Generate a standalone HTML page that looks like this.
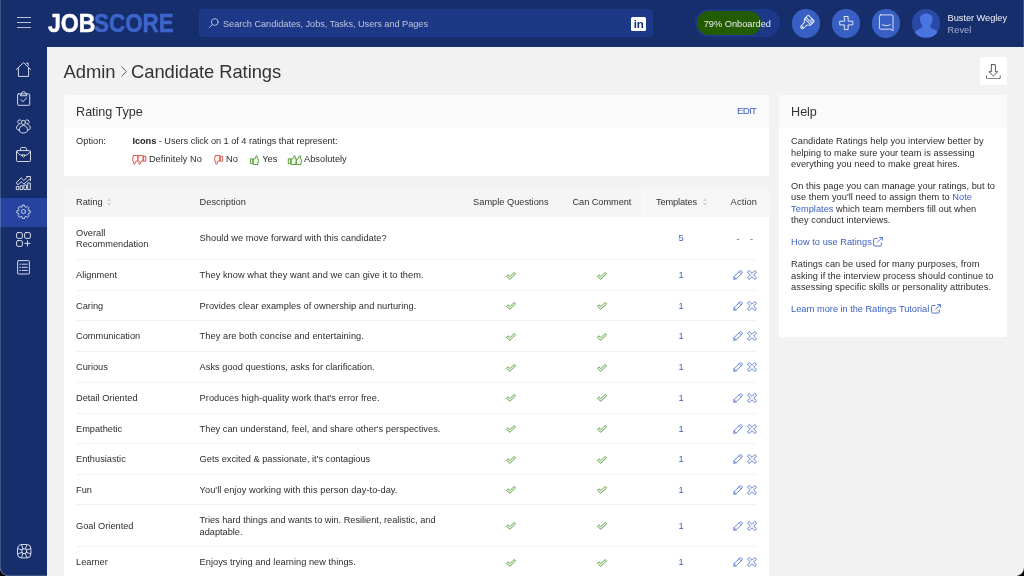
<!DOCTYPE html>
<html lang="en">
<head>
<meta charset="utf-8">
<title>Candidate Ratings - JobScore</title>
<style>
*{box-sizing:border-box;margin:0;padding:0}
html,body{width:1024px;height:576px;overflow:hidden;background:#000}
body{font-family:"Liberation Sans",Arial,sans-serif;font-size:9.24px;line-height:11.4px;color:#2d2d2d;position:relative}
#win{will-change:transform;position:absolute;left:0;top:0;width:1024px;height:576px;background:#f2f2f2;overflow:hidden;border-radius:0 0 8.5px 8.5px}
#frame{position:absolute;left:0;top:0;width:1024px;height:576px;border:1px solid rgba(255,255,255,.18);border-top:none;border-radius:0 0 8.5px 8.5px;z-index:50;pointer-events:none}
a{color:#3b5fc4;text-decoration:none}
/* top bar */
#top{position:absolute;left:0;top:0;width:1024px;height:47px;background:#172e6d}
#side{position:absolute;left:0;top:47px;width:47px;height:529px;background:#172e6d}
#side .act{position:absolute;left:0;top:151px;width:47px;height:28.7px;background:#2643a0}
#side svg{position:absolute;overflow:visible;fill:none;stroke:#dde2f0;stroke-width:.95;stroke-linecap:round;stroke-linejoin:round}
#burger{position:absolute;left:17px;top:17px;width:14px;height:11px}
#burger i{position:absolute;left:0;width:13.6px;height:1px;background:#b9c0d8}
#logo span{position:absolute;top:8.2px;font-size:25px;line-height:30px;font-weight:700;white-space:nowrap;transform-origin:0 0}
#logo .j{left:48.3px;color:#fff;-webkit-text-stroke:.5px #fff;transform:scaleX(.925)}
#logo .s{left:94.4px;color:#3c65cb;-webkit-text-stroke:.5px #3c65cb;transform:scaleX(.897)}
#search{position:absolute;left:199.3px;top:9.3px;width:453.3px;height:27.8px;background:#1e3888;border-radius:3px}
#search span{position:absolute;left:23.7px;top:9.3px;color:#bcc4dd;white-space:nowrap;letter-spacing:-.058px}
#search svg{position:absolute;left:9.5px;top:9px;width:10px;height:10px;overflow:visible}
#lin{position:absolute;left:432px;top:7.3px;width:14.6px;height:14.4px;background:#fff;border-radius:1.5px;color:#172e6d;font-weight:700;font-size:11.5px;line-height:14px;text-align:center;letter-spacing:-.3px}
#onb{position:absolute;left:694.8px;top:9.3px;width:85.4px;height:28px;border-radius:14px;background:#1e3888}
#onb i{position:absolute;left:2px;top:2.2px;width:64px;height:23.6px;border-radius:12px;background:#235c00}
#onb span{position:absolute;left:8.9px;top:9.3px;color:#e8ecf4;white-space:nowrap}
.cb{position:absolute;top:9.3px;width:28.5px;height:28.5px;border-radius:50%;background:#3860c4}
.cb svg{position:absolute;left:0;top:0;width:28.5px;height:28.5px;fill:none;stroke:#e6ebf8;stroke-width:.9;stroke-linejoin:round;stroke-linecap:round}
#av{position:absolute;left:911.8px;top:9.3px;width:28.5px;height:28.5px;border-radius:50%;background:#2a49a6;overflow:hidden}
#av svg{position:absolute;left:0;top:0;width:28.5px;height:28.5px}
#uname{position:absolute;left:947.6px;top:12.9px;color:#eef1f8;white-space:nowrap;letter-spacing:-.04px}
#ucomp{position:absolute;left:947.6px;top:24.8px;color:#a9b3cf;white-space:nowrap}
/* heading */
#h1{position:absolute;left:63.6px;top:60.8px;font-size:18.4px;line-height:22px;color:#333;white-space:nowrap;letter-spacing:-.08px}
#h1 svg{display:inline-block;width:6px;height:11px;margin:0 4.2px 0 5.6px;vertical-align:1px;fill:none;stroke:#555;stroke-width:.9}
#dl{position:absolute;left:979.8px;top:56.8px;width:27.2px;height:28px;background:#fff;border-radius:2px}
#dl svg{position:absolute;left:6.2px;top:7px;width:15px;height:15.4px;fill:none;stroke:#444;stroke-width:.9;stroke-linejoin:round;stroke-linecap:round}
.card{position:absolute;background:#fff;border-radius:2.5px;overflow:hidden}
.hd{position:absolute;left:0;top:0;right:0;background:#fafafa}
.ttl{position:absolute;font-size:12.6px;line-height:15px;color:#333;white-space:nowrap;letter-spacing:-.04px}
/* rating type */
#c1{left:64px;top:95px;width:704.6px;height:81.3px}
#c1 .hd{height:32.7px}
#c1 .ttl{left:12.1px;top:10.3px}
#edit{position:absolute;right:12.4px;top:10.2px;font-size:9.7px;color:#3b5fc4;letter-spacing:-.72px}
#opt{position:absolute;left:12.1px;top:41.1px}
#ol1{position:absolute;left:68.4px;top:41.1px;white-space:nowrap;letter-spacing:-.05px}
#ol1 b{font-weight:700;color:#222}
#ol2{position:absolute;left:68.4px;top:59.3px;white-space:nowrap;height:12px}
#ol2 span{position:absolute;top:0}
#ol2 svg{position:absolute;top:.6px;overflow:visible;stroke-width:.9;stroke-linejoin:round;stroke-linecap:round}
.red{stroke:#cf4f45;fill:#fdf1ef}
.grn{stroke:#4f9430;fill:#eef7ea}
/* table */
#c2{left:64px;top:186.8px;width:704.6px;height:400px;border-radius:2.5px 2.5px 0 0}
#c2 .hd{height:30.4px;background:#f5f5f5}
#c2 .hd .lt{position:absolute;left:579px;top:0;right:0;bottom:0;background:#f6f6f6;border-left:1px solid #f9f9f9}
#c2 .hd span{position:absolute;top:10.7px;white-space:nowrap;color:#333}
.sort{position:absolute;top:11.5px;width:4.2px;height:8px}
.sort:before,.sort:after{content:"";position:absolute;left:0;border-left:2.1px solid transparent;border-right:2.1px solid transparent}
.sort:before{top:0;border-bottom:3px solid #d4d4d4}
.sort:after{bottom:0;border-top:3px solid #d4d4d4}
.row{position:absolute;left:0;width:704.6px}
.row .c{position:absolute;top:2px;bottom:0;display:flex;align-items:center;white-space:nowrap}
.c1{left:12px}
.c2{left:135.6px}
.c3{left:440.8px;width:12px;justify-content:center}
.c4{left:532px;width:12px;justify-content:center}
.c5{left:607px;width:20px;justify-content:center}
.c6{left:669px;width:24.2px}
.sep{position:absolute;left:12px;right:11.6px;bottom:-.5px;height:1px;background:#f3f3f3}
.chk{width:10.100px;height:7.800px;position:relative;top:-.3px;left:.2px;overflow:visible}
.ic{width:10px;height:10px;overflow:visible;margin-left:.4px;position:relative;top:-.6px}
.ic2{margin-left:3.8px}
.dash span{display:inline-block;margin-left:3.4px;color:#666;position:relative;top:.8px}
.dash span+span{margin-left:10.6px}
/* help */
#c3{left:779.2px;top:95px;width:227.8px;height:241.6px}
#c3 .hd{height:32.7px}
#c3 .ttl{left:11.9px;top:10.3px}
#c3 p{position:absolute;left:11.9px;white-space:nowrap;letter-spacing:.035px}
#c3 svg{display:inline-block;width:10px;height:9.6px;vertical-align:-1.7px;margin-left:1.7px;fill:none;stroke:#3b5fc4;stroke-width:.8;overflow:visible}
</style>
</head>
<body>
<svg width="0" height="0" style="position:absolute">
 <defs>
  <path id="chk" d="M.500 4.400 2 2.800 3.800 4.600 8.300.500 9.600 1.900 3.800 7.300Z" fill="#f1f8ee" stroke="#4f9430" stroke-width=".85" stroke-linejoin="round"/>
  <g id="pen" fill="#fff" stroke="#4468c8" stroke-width=".8" stroke-linejoin="round" stroke-linecap="round"><path d="M7 .9a1 1 0 0 1 1.400 0l.7.700a1 1 0 0 1 0 1.400L3.200 8.900.6 9.400 1.100 6.800Z"/><path d="M6.200 1.700 8.300 3.800M1.100 6.800 3.200 8.900" fill="none"/></g>
  <path id="xx" d="M2.200.5 5 3.300 7.800.5 9.500 2.200 6.700 5 9.500 7.800 7.800 9.500 5 6.700 2.200 9.500.5 7.800 3.300 5 .5 2.200Z" fill="#fff" stroke="#4468c8" stroke-width=".85" stroke-linejoin="round"/>
 </defs>
</svg>
<div id="win">
 <div id="top">
  <div id="burger"><i style="top:0"></i><i style="top:4.8px"></i><i style="top:9.5px"></i></div>
  <div id="logo"><span class="j">JOB</span><span class="s">SCORE</span></div>
  <div id="search">
   <svg viewBox="0 0 10 10" fill="none" stroke="#bcc4dd" stroke-width=".9" stroke-linecap="round"><circle cx="5.800" cy="4" r="3.400"/><path d="M3.400 6.500.4 9.600"/></svg>
   <span>Search Candidates, Jobs, Tasks, Users and Pages</span>
   <div id="lin">in</div>
  </div>
  <div id="onb"><i></i><span>79% Onboarded</span></div>
  <div class="cb" style="left:791.6px"><svg viewBox="0 0 28.500 28.500"><g transform="translate(14.250 14.200) scale(1.1) rotate(45) translate(-14.250 -14.250)"><rect x="10.300" y="7.700" width="7.900" height="4.700" rx=".5"/><path d="M10.300 10.600h7.900M15.300 7.700v1.600M16.800 7.700v1.600M10.300 12.400c0 1.700 2.400 1.400 2.400 3.100v3.700a1.550 1.550 0 0 0 3.100 0v-3.700c0-1.700 2.400-1.400 2.400-3.100"/><circle cx="14.250" cy="19.100" r=".45"/></g></svg></div>
  <div class="cb" style="left:831.8px"><svg viewBox="0 0 28.500 28.500"><path d="M12.400 7.500h3.700v4.700h4.700v3.700h-4.700v4.700h-3.700v-4.700H7.700v-3.700h4.700z" stroke-width=".95"/></svg></div>
  <div class="cb" style="left:871.9px"><svg viewBox="0 0 28.500 28.500"><path d="M8.800 5.900h10.800a1.400 1.400 0 0 1 1.400 1.400v14.400l-2.300-1.500H8.800a1.400 1.400 0 0 1-1.400-1.400V7.300a1.400 1.400 0 0 1 1.400-1.400z"/><path d="M10.200 15.700c2.400 1.300 5.600 1.300 8 0"/></svg></div>
  <div id="av"><svg viewBox="0 0 28.500 28.500"><path fill="#4a74e0" d="M14.400 4.400C18 4.400 20.700 6.600 20.700 10c0 2.600-1 4.600-2.200 5.800v1.800c0 1 .6 1.400 1.600 1.800 2.500 1 4.500 2 5.500 3.600v5.500H3V23c1-1.600 3-2.600 5.500-3.600 1-.4 1.600-.8 1.600-1.800v-1.800C8.900 14.600 7.900 12.600 7.900 10c0-3.400 2.800-5.600 6.500-5.600z"/></svg></div>
  <div id="uname">Buster Wegley</div>
  <div id="ucomp">Revel</div>
 </div>
 <div id="side">
  <div class="act"></div>
  <!-- home -->
  <svg style="left:16.300px;top:15.200px" width="15" height="15" viewBox="0 0 15 15"><path d="M.5 7.400 7.500.6l7 6.800M2.400 5.700v8.700h10.200V5.700M10.300 1.200h1.900v2.300"/></svg>
  <!-- clipboard -->
  <svg style="left:16.800px;top:43.700px" width="14" height="15" viewBox="0 0 14 15"><rect x=".6" y="2.900" width="12.100" height="11.400" rx=".8"/><path d="M3.500 4.400 4.700 1.600 6.650.5l1.950 1.100 1.200 2.800zM3.900 8.700l2 1.900 3.800-3.700"/></svg>
  <!-- people -->
  <svg style="left:16.200px;top:71.600px" width="15" height="14.500" viewBox="0 0 15 14.500"><circle cx="7.400" cy="3.500" r="2.100"/><path d="M3.300 11.100c0-2.900 1.600-4.500 4.100-4.500s4.100 1.600 4.100 4.500c0 2-1.600 2.900-4.100 2.900s-4.100-.9-4.100-2.900zM5.300 1.700A2 2 0 1 0 4.100 4.800M2.900 5.500C1.300 6.100.5 7.400.5 9.100c0 1 .9 1.700 2.100 1.800M9.500 1.700a2 2 0 1 1 1.200 3.100M11.900 5.500c1.600.6 2.400 1.900 2.400 3.600 0 1-.9 1.700-2.100 1.800"/></svg>
  <!-- briefcase -->
  <svg style="left:16.200px;top:99.600px" width="15" height="15" viewBox="0 0 15 15"><rect x=".5" y="3.600" width="14" height="10.900" rx=".9"/><path d="M4.600 3.600V1.600a1 1 0 0 1 1-1h3.800a1 1 0 0 1 1 1v2M.7 4.300C2 7 4.300 8.300 6.500 8.600M14.300 4.300C13 7 10.700 8.300 8.500 8.600M6.500 7.800h2v1.500l-1 .7-1-.7z"/></svg>
  <!-- chart -->
  <svg style="left:16.200px;top:128.800px" width="15" height="14" viewBox="0 0 15 14"><path d="M.5 6.500 5.200 1.800 7.800 4.400 11.600 1.200 10.400.5h4.100v4.100L13.400 3.400 7.700 8.100 5.200 5.600 2.200 8.600zM.7 10.600h2.200v3H.7zM4.500 9.800h2.200v3.800H4.500zM8.300 9h2.200v4.600H8.300zM12.100 7h2.200v6.600h-2.200z"/></svg>
  <!-- gear -->
  <svg style="left:16.200px;top:156.600px" width="15" height="15" viewBox="0 0 15 15"><g transform="translate(7.500 7.500) scale(.9) translate(-7.500 -7.500)"><circle cx="7.500" cy="7.500" r="2.300"/><path d="M6.300.5h2.400l.4 1.900 1.100.5 1.700-1.100 1.700 1.700-1.100 1.700.5 1.100 1.900.4v2.400l-1.900.4-.5 1.100 1.100 1.700-1.700 1.700-1.700-1.100-1.100.5-.4 1.900H6.300l-.4-1.900-1.100-.5-1.700 1.100-1.700-1.700 1.100-1.700-.5-1.100-1.900-.4V6.700l1.900-.4.5-1.100-1.100-1.700 1.700-1.700 1.700 1.100 1.100-.5z"/></g></svg>
  <!-- grid plus -->
  <svg style="left:16.200px;top:185.200px" width="15" height="14.500" viewBox="0 0 15 14.500"><rect x=".6" y=".6" width="5.800" height="5.800" rx="1.300"/><rect x="8.600" y=".6" width="5.800" height="5.800" rx="1.300"/><rect x=".6" y="8.600" width="5.800" height="5.800" rx="1.300"/><path d="M11.500 8.800v5.200M8.900 11.400h5.200"/></svg>
  <!-- list -->
  <svg style="left:17px;top:213.300px" width="13" height="14.600" viewBox="0 0 13 14.600"><rect x=".6" y=".6" width="11.800" height="13.400" rx=".8"/><path d="M5.100 4.200h5.200M5.100 7.300h5.200M5.100 10.400h5.200M2.700 4.200h.8M2.700 7.300h.8M2.700 10.400h.8"/></svg>
  <!-- support -->
  <svg style="left:16.600px;top:497.400px" width="14.400" height="14.400" viewBox="0 0 14.400 14.400"><rect x=".5" y=".5" width="13.400" height="13.400" rx="4"/><circle cx="7.200" cy="7.200" r="2.500"/><path d="M5.900 5 4.700.9M8.500 5 9.700.9M5.900 9.400l-1.200 4.100M8.500 9.400l1.200 4.100M5 5.900.9 4.700M5 8.500.9 9.700M9.400 5.900l4.100-1.200M9.400 8.500l4.100 1.200"/></svg>
 </div>

 <div id="h1">Admin<svg viewBox="0 0 6 11"><path d="M.6.600 5.300 5.500.6 10.400"/></svg>Candidate Ratings</div>
 <div id="dl"><svg viewBox="0 0 15 15.400"><path d="M5.700.6h3.300a.4.400 0 0 1 .4.400v6.700h2.300L7.350 12 3 7.700h2.300V1a.4.400 0 0 1 .4-.4zM.5 11.900v1.800a1.100 1.100 0 0 0 1.100 1.100h11.500a1.100 1.100 0 0 0 1.100-1.100v-1.800"/></svg></div>

 <div class="card" id="c1">
  <div class="hd"></div>
  <div class="ttl">Rating Type</div>
  <a id="edit">EDIT</a>
  <div id="opt">Option:</div>
  <div id="ol1"><b>Icons</b> - Users click on 1 of 4 ratings that represent:</div>
  <div id="ol2">
   <svg class="red" style="left:-.2px" width="14.200" height="10" viewBox="0 0 14.200 10"><path d="M1.600.500h4.200v5.600H4.200L2.900 9c-.3.600-1.200.400-1.200-.300V6.100H1.300C.5 6.100.300 5.400.500 4.600L1.100 1.400C1.200.800 1.300.500 1.600.500z"/><g transform="translate(5.300 0)"><path d="M1.600.500h4.200v5.600H4.200L2.900 9c-.3.600-1.200.400-1.200-.300V6.100H1.300C.5 6.100.300 5.400.500 4.600L1.100 1.400C1.200.800 1.300.500 1.600.500z"/><path d="M6.700 1.300h1.900v4.900H6.700z"/></g></svg>
   <span style="left:16.500px;letter-spacing:.06px">Definitely No</span>
   <svg class="red" style="left:81.600px" width="9" height="10" viewBox="0 0 9 10"><path d="M1.600.500h4.200v5.600H4.200L2.900 9c-.3.600-1.200.400-1.200-.300V6.100H1.300C.5 6.100.300 5.400.500 4.600L1.100 1.400C1.200.800 1.300.500 1.600.500z"/><path d="M6.700 1.300h1.900v4.900H6.700z"/></svg>
   <span style="left:93.600px">No</span>
   <svg class="grn" style="left:117.300px" width="9" height="10" viewBox="0 0 9 10"><g transform="rotate(180 4.500 5)"><path d="M1.600.500h4.200v5.600H4.200L2.900 9c-.3.600-1.200.400-1.200-.300V6.100H1.300C.5 6.100.300 5.400.500 4.600L1.100 1.400C1.200.800 1.300.500 1.600.500z"/><path d="M6.700 1.300h1.900v4.900H6.700z"/></g></svg>
   <span style="left:129.800px">Yes</span>
   <svg class="grn" style="left:155.400px" width="14.200" height="10" viewBox="0 0 14.200 10"><g transform="rotate(180 7.100 5)"><g transform="translate(5.300 0)"><path d="M1.600.500h4.200v5.600H4.200L2.900 9c-.3.600-1.200.400-1.200-.300V6.100H1.300C.5 6.100.300 5.400.500 4.600L1.100 1.400C1.200.800 1.300.500 1.600.500z"/><path d="M6.700 1.300h1.900v4.900H6.700z"/></g><path d="M1.600.500h4.200v5.600H4.200L2.900 9c-.3.600-1.200.400-1.200-.300V6.100H1.300C.5 6.100.300 5.400.500 4.600L1.100 1.400C1.200.800 1.300.500 1.600.500z"/></g></svg>
   <span style="left:171.700px">Absolutely</span>
  </div>
 </div>

 <div class="card" id="c2">
  <div class="hd"><div class="lt"></div>
   <span style="left:12px">Rating</span><i class="sort" style="left:43.200px"></i>
   <span style="left:135.600px">Description</span>
   <span style="left:409.100px">Sample Questions</span>
   <span style="left:508.500px;letter-spacing:-.06px">Can Comment</span>
   <span style="left:592px;letter-spacing:-.13px">Templates</span><i class="sort" style="left:639px"></i>
   <span style="left:666.600px;letter-spacing:.15px">Action</span>
  </div>
<div class="row" style="top:30.3px;height:42.2px"><div class="c c1">Overall<br>Recommendation</div><div class="c c2" style="letter-spacing:0.042px">Should we move forward with this candidate?</div><div class="c c5"><a>5</a></div><div class="c c6 dash"><span>-</span><span>-</span></div><i class="sep"></i></div>
<div class="row" style="top:72.5px;height:31.2px"><div class="c c1">Alignment</div><div class="c c2" style="letter-spacing:0.052px">They know what they want and we can give it to them.</div><div class="c c3"><svg class="chk" viewBox="0 0 10.100 7.800"><use href="#chk"/></svg></div><div class="c c4"><svg class="chk" viewBox="0 0 10.100 7.800"><use href="#chk"/></svg></div><div class="c c5"><a>1</a></div><div class="c c6"><svg class="ic" viewBox="0 0 10 10"><use href="#pen"/></svg><svg class="ic ic2" viewBox="0 0 10 10"><use href="#xx"/></svg></div><i class="sep"></i></div>
<div class="row" style="top:103.7px;height:30.2px"><div class="c c1">Caring</div><div class="c c2" style="letter-spacing:0.031px">Provides clear examples of ownership and nurturing.</div><div class="c c3"><svg class="chk" viewBox="0 0 10.100 7.800"><use href="#chk"/></svg></div><div class="c c4"><svg class="chk" viewBox="0 0 10.100 7.800"><use href="#chk"/></svg></div><div class="c c5"><a>1</a></div><div class="c c6"><svg class="ic" viewBox="0 0 10 10"><use href="#pen"/></svg><svg class="ic ic2" viewBox="0 0 10 10"><use href="#xx"/></svg></div><i class="sep"></i></div>
<div class="row" style="top:133.9px;height:30.7px"><div class="c c1">Communication</div><div class="c c2" style="letter-spacing:0.054px">They are both concise and entertaining.</div><div class="c c3"><svg class="chk" viewBox="0 0 10.100 7.800"><use href="#chk"/></svg></div><div class="c c4"><svg class="chk" viewBox="0 0 10.100 7.800"><use href="#chk"/></svg></div><div class="c c5"><a>1</a></div><div class="c c6"><svg class="ic" viewBox="0 0 10 10"><use href="#pen"/></svg><svg class="ic ic2" viewBox="0 0 10 10"><use href="#xx"/></svg></div><i class="sep"></i></div>
<div class="row" style="top:164.6px;height:30.7px"><div class="c c1">Curious</div><div class="c c2" style="letter-spacing:0.025px">Asks good questions, asks for clarification.</div><div class="c c3"><svg class="chk" viewBox="0 0 10.100 7.800"><use href="#chk"/></svg></div><div class="c c4"><svg class="chk" viewBox="0 0 10.100 7.800"><use href="#chk"/></svg></div><div class="c c5"><a>1</a></div><div class="c c6"><svg class="ic" viewBox="0 0 10 10"><use href="#pen"/></svg><svg class="ic ic2" viewBox="0 0 10 10"><use href="#xx"/></svg></div><i class="sep"></i></div>
<div class="row" style="top:195.3px;height:31.2px"><div class="c c1">Detail Oriented</div><div class="c c2" style="letter-spacing:0.036px">Produces high-quality work that's error free.</div><div class="c c3"><svg class="chk" viewBox="0 0 10.100 7.800"><use href="#chk"/></svg></div><div class="c c4"><svg class="chk" viewBox="0 0 10.100 7.800"><use href="#chk"/></svg></div><div class="c c5"><a>1</a></div><div class="c c6"><svg class="ic" viewBox="0 0 10 10"><use href="#pen"/></svg><svg class="ic ic2" viewBox="0 0 10 10"><use href="#xx"/></svg></div><i class="sep"></i></div>
<div class="row" style="top:226.5px;height:30.2px"><div class="c c1">Empathetic</div><div class="c c2" style="letter-spacing:0.014px">They can understand, feel, and share other's perspectives.</div><div class="c c3"><svg class="chk" viewBox="0 0 10.100 7.800"><use href="#chk"/></svg></div><div class="c c4"><svg class="chk" viewBox="0 0 10.100 7.800"><use href="#chk"/></svg></div><div class="c c5"><a>1</a></div><div class="c c6"><svg class="ic" viewBox="0 0 10 10"><use href="#pen"/></svg><svg class="ic ic2" viewBox="0 0 10 10"><use href="#xx"/></svg></div><i class="sep"></i></div>
<div class="row" style="top:256.7px;height:30.7px"><div class="c c1">Enthusiastic</div><div class="c c2" style="letter-spacing:0px">Gets excited &amp; passionate, it's contagious</div><div class="c c3"><svg class="chk" viewBox="0 0 10.100 7.800"><use href="#chk"/></svg></div><div class="c c4"><svg class="chk" viewBox="0 0 10.100 7.800"><use href="#chk"/></svg></div><div class="c c5"><a>1</a></div><div class="c c6"><svg class="ic" viewBox="0 0 10 10"><use href="#pen"/></svg><svg class="ic ic2" viewBox="0 0 10 10"><use href="#xx"/></svg></div><i class="sep"></i></div>
<div class="row" style="top:287.4px;height:30.5px"><div class="c c1">Fun</div><div class="c c2" style="letter-spacing:0.053px">You'll enjoy working with this person day-to-day.</div><div class="c c3"><svg class="chk" viewBox="0 0 10.100 7.800"><use href="#chk"/></svg></div><div class="c c4"><svg class="chk" viewBox="0 0 10.100 7.800"><use href="#chk"/></svg></div><div class="c c5"><a>1</a></div><div class="c c6"><svg class="ic" viewBox="0 0 10 10"><use href="#pen"/></svg><svg class="ic ic2" viewBox="0 0 10 10"><use href="#xx"/></svg></div><i class="sep"></i></div>
<div class="row" style="top:317.9px;height:41.7px"><div class="c c1">Goal Oriented</div><div class="c c2" style="letter-spacing:-0.023px">Tries hard things and wants to win. Resilient, realistic, and<br>adaptable.</div><div class="c c3"><svg class="chk" viewBox="0 0 10.100 7.800"><use href="#chk"/></svg></div><div class="c c4"><svg class="chk" viewBox="0 0 10.100 7.800"><use href="#chk"/></svg></div><div class="c c5"><a>1</a></div><div class="c c6"><svg class="ic" viewBox="0 0 10 10"><use href="#pen"/></svg><svg class="ic ic2" viewBox="0 0 10 10"><use href="#xx"/></svg></div><i class="sep"></i></div>
<div class="row" style="top:359.6px;height:30.7px"><div class="c c1">Learner</div><div class="c c2" style="letter-spacing:0.018px">Enjoys trying and learning new things.</div><div class="c c3"><svg class="chk" viewBox="0 0 10.100 7.800"><use href="#chk"/></svg></div><div class="c c4"><svg class="chk" viewBox="0 0 10.100 7.800"><use href="#chk"/></svg></div><div class="c c5"><a>1</a></div><div class="c c6"><svg class="ic" viewBox="0 0 10 10"><use href="#pen"/></svg><svg class="ic ic2" viewBox="0 0 10 10"><use href="#xx"/></svg></div><i class="sep"></i></div>
 </div>

 <div class="card" id="c3">
  <div class="hd"></div>
  <div class="ttl">Help</div>
  <p style="top:41.100px">Candidate Ratings help you interview better by<br>helping to make sure your team is assessing<br>everything you need to make great hires.</p>
  <p style="top:85.900px">On this page you can manage your ratings, but to<br>use them you'll need to assign them to <a>Note</a><br><a>Templates</a> which team members fill out when<br>they conduct interviews.</p>
  <p style="top:142px"><a>How to use Ratings<svg viewBox="0 0 9 9"><path d="M7.600 5v2.600a.9.900 0 0 1-.9.900H1.300a.9.900 0 0 1-.9-.9V2.300a.9.900 0 0 1 .9-.9H4M5.600.4h3v3M8.600.4 3.800 5.200"/></svg></a></p>
  <p style="top:164.400px">Ratings can be used for many purposes, from<br>asking if the interview process should continue to<br>assessing specific skills or personality attributes.</p>
  <p style="top:209.200px;letter-spacing:-.03px"><a>Learn more in the Ratings Tutorial<svg viewBox="0 0 9 9"><path d="M7.600 5v2.600a.9.900 0 0 1-.9.900H1.300a.9.900 0 0 1-.9-.9V2.300a.9.900 0 0 1 .9-.9H4M5.600.4h3v3M8.600.4 3.800 5.200"/></svg></a></p>
 </div>
</div>
<div id="frame"></div>
</body>
</html>
